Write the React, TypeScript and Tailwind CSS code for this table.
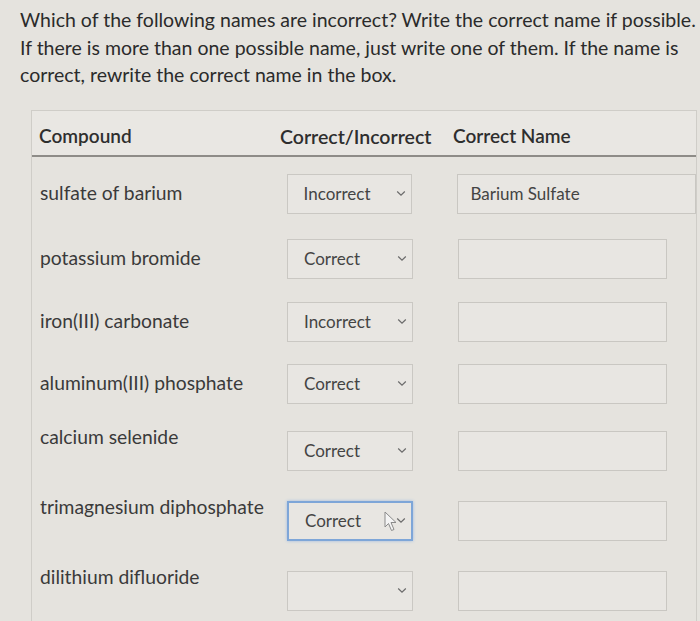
import React from "react";

type Row = {
  name: string;
  value: string;
  answer: string;
  textTop: number;
  gap: number;
  focused?: boolean;
};

const rows: Row[] = [
  { name: "sulfate of barium", value: "Incorrect", answer: "Barium Sulfate", textTop: 0, gap: 0 },
  { name: "potassium bromide", value: "Correct", answer: "", textTop: 0, gap: 25 },
  { name: "iron(III) carbonate", value: "Incorrect", answer: "", textTop: 0, gap: 23 },
  { name: "aluminum(III) phosphate", value: "Correct", answer: "", textTop: 0, gap: 22 },
  { name: "calcium selenide", value: "Correct", answer: "", textTop: -13, gap: 27 },
  { name: "trimagnesium diphosphate", value: "Correct", answer: "", textTop: -13, gap: 30, focused: true },
  { name: "dilithium difluoride", value: "", answer: "", textTop: -13, gap: 30 },
];

function Chevron() {
  return (
    <svg width="10" height="7" viewBox="0 0 10 7" className="shrink-0">
      <path d="M1.2 1.5 L5 5.2 L8.8 1.5" fill="none" stroke="#6b6b6b" strokeWidth="1.2" />
    </svg>
  );
}

function Cursor() {
  return (
    <svg width="16" height="22" viewBox="0 0 16 22" className="absolute left-[95px] top-[8px]">
      <path
        d="M1 1 L1 16 L4.5 12.5 L7.5 19.5 L10 18.5 L7 11.5 L12 11.5 Z"
        fill="#f4f4f4"
        stroke="#8a8a8a"
        strokeWidth="1"
        strokeLinejoin="round"
      />
    </svg>
  );
}

export default function App() {
  return (
    <div
      className="w-[700px] h-[621px] overflow-hidden bg-[#e5e3de] text-[#333]"
      style={{ fontFamily: "Lato, 'Open Sans', sans-serif" }}
    >
      <div className="pl-[20px] pt-[6px] text-[19.5px] leading-[27.5px] text-[#2b2b2b] whitespace-nowrap">
        Which of the following names are incorrect? Write the correct name if possible.
        <br />
        If there is more than one possible name, just write one of them. If the name is
        <br />
        correct, rewrite the correct name in the box.
      </div>

      <div className="ml-[31px] mr-[3px] mt-[21px] border-l border-r border-t border-[#cfcdc8] h-[520px]">
        <div className="flex items-center h-[46px] pt-[8px] bg-[#e9e7e3] border-b-2 border-[#8e8c88] text-[19px] font-semibold text-[#2e2e2e]">
          <div className="w-[248px] pl-[7px]">Compound</div>
          <div className="w-[173px] text-[19.5px]">Correct/Incorrect</div>
          <div>Correct Name</div>
        </div>

        <div className="pt-[17px] flex flex-col">
          {rows.map((r, i) => (
            <div key={i} className="flex items-center h-[40px]" style={{ marginTop: r.gap }}>
              <div
                className="w-[255px] pl-[8px] text-[19.3px] text-[#3a3a3a] relative"
                style={{ top: r.textTop }}
              >
                {r.name}
              </div>
              <div
                className={
                  "relative flex items-center justify-between w-[126px] h-[40px] pl-[16px] pr-[5px] text-[17px] text-[#444] bg-[#e8e6e2] " +
                  (r.focused
                    ? "border-2 border-[#7ea6d8] shadow-[0_0_3px_#9dbce3]"
                    : "border border-[#cac8c3]")
                }
              >
                <span>{r.value}</span>
                <Chevron />
                {r.focused && <Cursor />}
              </div>
              <div
                className={
                  "ml-[45px] h-[40px] border border-[#c9c7c2] bg-[#e8e6e2] flex items-center pl-[12px] text-[17px] text-[#444] " +
                  (i === 0 ? "w-[239px]" : "w-[209px]")
                }
              >
                {r.answer}
              </div>
            </div>
          ))}
        </div>
      </div>
    </div>
  );
}
